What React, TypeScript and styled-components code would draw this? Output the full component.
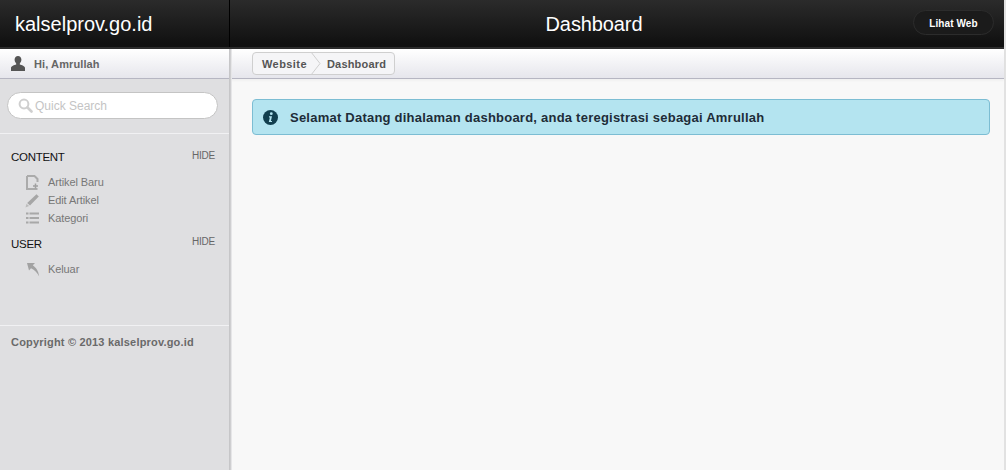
import React from "react";
import styled, { createGlobalStyle } from "styled-components";

const Global = createGlobalStyle`
  html, body { margin: 0; padding: 0; height: 100%; background: #e2e2e2; }
  #root { height: 100%; }
  * { box-sizing: border-box; }
  body { font-family: "Liberation Sans", Arial, sans-serif; overflow: hidden; }
`;

const Page = styled.div`
  width: 1004px;
  height: 470px;
  display: flex;
  flex-direction: column;
  background: #f8f8f8;
`;

const Header = styled.header`
  height: 49px;
  flex: none;
  display: flex;
  background: linear-gradient(#2b2b2b, #111 92%);
  border-bottom: 2px solid #2c2c2c;
`;

const Brand = styled.div`
  width: 230px;
  flex: none;
  padding-left: 15px;
  font-size: 20px;
  line-height: 48px;
  color: #fff;
  border-right: 1px solid #000;
`;

const Title = styled.h1`
  flex: 1;
  margin: 0;
  padding-left: 45px;
  font-size: 20px;
  font-weight: 400;
  line-height: 48px;
  color: #fff;
  text-align: center;
  letter-spacing: -0.1px;
`;

const WebButton = styled.a`
  align-self: flex-start;
  margin: 10px 10px 0 0;
  width: 81px;
  height: 25px;
  border-radius: 13px;
  border: 1px solid #2c2c2c;
  background: #1b1b1b;
  color: #fff;
  font-size: 10px;
  font-weight: 700;
  line-height: 25px;
  text-align: center;
  letter-spacing: 0.1px;
`;

const Body = styled.div`
  flex: 1;
  display: flex;
  min-height: 0;
`;

const Sidebar = styled.aside`
  position: relative;
  z-index: 1;
  width: 230px;
  flex: none;
  background: #dfdfe1;
  border-right: 1px solid #c6c6c8;
  box-shadow: 1px 0 0 #cfcfd1, 2px 0 0 #e6e6e8;
  display: flex;
  flex-direction: column;
`;

const UserBar = styled.div`
  height: 30px;
  flex: none;
  display: flex;
  align-items: center;
  gap: 9px;
  padding-left: 11px;
  background: linear-gradient(#fff, #e6e6ec);
  border-bottom: 1px solid #b6b6c2;
  font-size: 11px;
  font-weight: 700;
  color: #666;
  letter-spacing: 0.1px;
`;

const SearchArea = styled.div`
  height: 55px;
  flex: none;
  padding: 13px 11px 0 7px;
  border-bottom: 1px solid #f1f1f3;
`;

const SearchBox = styled.div`
  height: 27px;
  display: flex;
  align-items: center;
  gap: 2px;
  padding-left: 10px;
  background: #fff;
  border: 1px solid #c4c4c4;
  border-radius: 14px;
  font-size: 12px;
  color: #c4c4c4;
`;

const Section = styled.div<{ $top: number }>`
  margin-top: ${(p) => p.$top}px;
  padding: 0 14px 0 11px;
`;

const SectionHead = styled.div`
  display: flex;
  justify-content: space-between;
  align-items: flex-start;
  height: 24px;
`;

const SectionTitle = styled.span`
  font-size: 11.500px;
  line-height: 16px;
  color: #111;
  letter-spacing: -0.3px;
`;

const Hide = styled.span<{ $up?: number }>`
  margin-top: ${(p) => 1 - (p.$up ?? 0)}px;
  font-size: 10px;
  line-height: 12px;
  letter-spacing: -0.2px;
  color: #666;
`;

const NavItem = styled.div`
  height: 18px;
  display: flex;
  align-items: center;
  gap: 8px;
  padding-left: 14px;
  font-size: 11px;
  letter-spacing: -0.1px;
  color: #777;
`;

const IconSlot = styled.span`
  width: 15px;
  height: 15px;
  flex: none;
  display: flex;
  align-items: center;
  justify-content: center;
`;

const Copyright = styled.div`
  margin-top: 47px;
  padding: 9px 11px 0;
  border-top: 1px solid #f1f1f3;
  font-size: 11px;
  font-weight: 700;
  line-height: 14px;
  color: #6a6a6a;
  letter-spacing: 0.19px;
`;

const Main = styled.main`
  flex: 1;
  min-width: 0;
  display: flex;
  flex-direction: column;
`;

const CrumbBar = styled.div`
  height: 30px;
  flex: none;
  padding: 3px 0 0 22px;
  background: linear-gradient(#fff, #e6e6ec);
  border-bottom: 1px solid #b6b6c2;
  box-shadow: 0 2px 2px rgba(0, 0, 0, 0.03);
`;

const Crumbs = styled.div`
  display: inline-flex;
  height: 23px;
  align-items: center;
  border: 1px solid #cfcfcf;
  border-radius: 4px;
  background: #f5f5f7;
  font-size: 11px;
  font-weight: 700;
  color: #555;
`;

const Crumb = styled.span<{ $last?: boolean }>`
  padding: ${(p) => (p.$last ? "0 8px 0 6px" : "0 4px 0 9px")};
  letter-spacing: ${(p) => (p.$last ? "0.2px" : "0.42px")};
`;

const Chevron = styled.svg`
  display: block;
  flex: none;
`;

const Content = styled.div`
  flex: 1;
  padding: 20px 14px 0 22px;
`;

const Alert = styled.div`
  height: 36px;
  display: flex;
  align-items: center;
  gap: 12px;
  padding-left: 10px;
  background: #b4e4f0;
  border: 1px solid #7cbdd3;
  border-radius: 4px;
  font-size: 13px;
  font-weight: 700;
  color: #1e2c38;
  letter-spacing: 0.23px;
`;

const UserIcon = () => (
  <svg width="14" height="15" viewBox="0 0 14 15">
    <path d="M7 0c2 0 3.4 1.5 3.4 3.6 0 1.6-.7 3-1.6 3.8v1.2c1.8.5 5.2 1.6 5.2 3.4V15H0v-3c0-1.8 3.4-2.9 5.2-3.4V7.400C4.300 6.600 3.600 5.200 3.600 3.600 3.600 1.500 5 0 7 0z" fill="#555" />
  </svg>
);

const SearchIcon = () => (
  <svg width="15" height="15" viewBox="0 0 15 15">
    <circle cx="6" cy="6" r="4.400" fill="none" stroke="#cfcfcf" strokeWidth="2" />
    <path d="M9.500 9.500l4 4" stroke="#cfcfcf" strokeWidth="2.600" strokeLinecap="round" />
  </svg>
);

const NewIcon = () => (
  <svg width="13" height="15" viewBox="0 0 13 15">
    <path d="M1 1h7.500L11.500 4v3M11.500 14H1V1" fill="none" stroke="#ababab" strokeWidth="2" />
    <path d="M9.500 8.500v5M7 11h5" stroke="#a0a0a0" strokeWidth="1.500" />
  </svg>
);

const PencilIcon = () => (
  <svg width="15" height="15" viewBox="0 0 15 15">
    <path d="M11.500 1.200l2.300 2.300L5 12.400l-2.800-2.500z" fill="#a6a6a6" />
    <path d="M1.500 10.700l2.600 2.400L.5 14.500z" fill="#bbb" />
  </svg>
);

const ListIcon = () => (
  <svg width="13" height="12" viewBox="0 0 13 12">
    <path d="M0 1.500h13M0 6h13M0 10.500h13" stroke="#a8a8a8" strokeWidth="2" />
    <path d="M3 0v12" stroke="#dfdfe1" strokeWidth="1" />
  </svg>
);

const BackIcon = () => (
  <svg width="14" height="15" viewBox="0 0 14 15">
    <path d="M1 1h8L6.800 3.300C10 5.500 12.300 8.800 13.200 14.500 11.500 10.800 8.800 8 5 6.200L3 8.500z" fill="#a2a2a2" />
  </svg>
);

const InfoIcon = () => (
  <svg width="15" height="15" viewBox="0 0 15 15">
    <circle cx="7.500" cy="7.500" r="7.500" fill="#123f4f" />
    <circle cx="8.300" cy="3.700" r="1.400" fill="#b4e4f0" />
    <path d="M6 6.300h3L7.900 11h1.100v1.100H5.800L6.900 7.400H6z" fill="#b4e4f0" />
  </svg>
);

export default function App() {
  return (
    <Page>
      <Global />
      <Header>
        <Brand>kalselprov.go.id</Brand>
        <Title>Dashboard</Title>
        <WebButton>Lihat Web</WebButton>
      </Header>
      <Body>
        <Sidebar>
          <UserBar>
            <UserIcon />
            Hi, Amrullah
          </UserBar>
          <SearchArea>
            <SearchBox>
              <SearchIcon />
              Quick Search
            </SearchBox>
          </SearchArea>
          <Section $top={15}>
            <SectionHead>
              <SectionTitle>CONTENT</SectionTitle>
              <Hide>HIDE</Hide>
            </SectionHead>
            <NavItem><IconSlot><NewIcon /></IconSlot>Artikel Baru</NavItem>
            <NavItem><IconSlot><PencilIcon /></IconSlot>Edit Artikel</NavItem>
            <NavItem><IconSlot><ListIcon /></IconSlot>Kategori</NavItem>
          </Section>
          <Section $top={9}>
            <SectionHead>
              <SectionTitle>USER</SectionTitle>
              <Hide $up={1}>HIDE</Hide>
            </SectionHead>
            <NavItem><IconSlot><BackIcon /></IconSlot>Keluar</NavItem>
          </Section>
          <Copyright>Copyright © 2013 kalselprov.go.id</Copyright>
        </Sidebar>
        <Main>
          <CrumbBar>
            <Crumbs>
              <Crumb>Website</Crumb>
              <Chevron width="10" height="23" viewBox="0 0 10 23">
                <path d="M0 0l9 11.500L0 23" fill="none" stroke="#cfcfcf" />
              </Chevron>
              <Crumb $last>Dashboard</Crumb>
            </Crumbs>
          </CrumbBar>
          <Content>
            <Alert>
              <InfoIcon />
              Selamat Datang dihalaman dashboard, anda teregistrasi sebagai Amrullah
            </Alert>
          </Content>
        </Main>
      </Body>
    </Page>
  );
}
